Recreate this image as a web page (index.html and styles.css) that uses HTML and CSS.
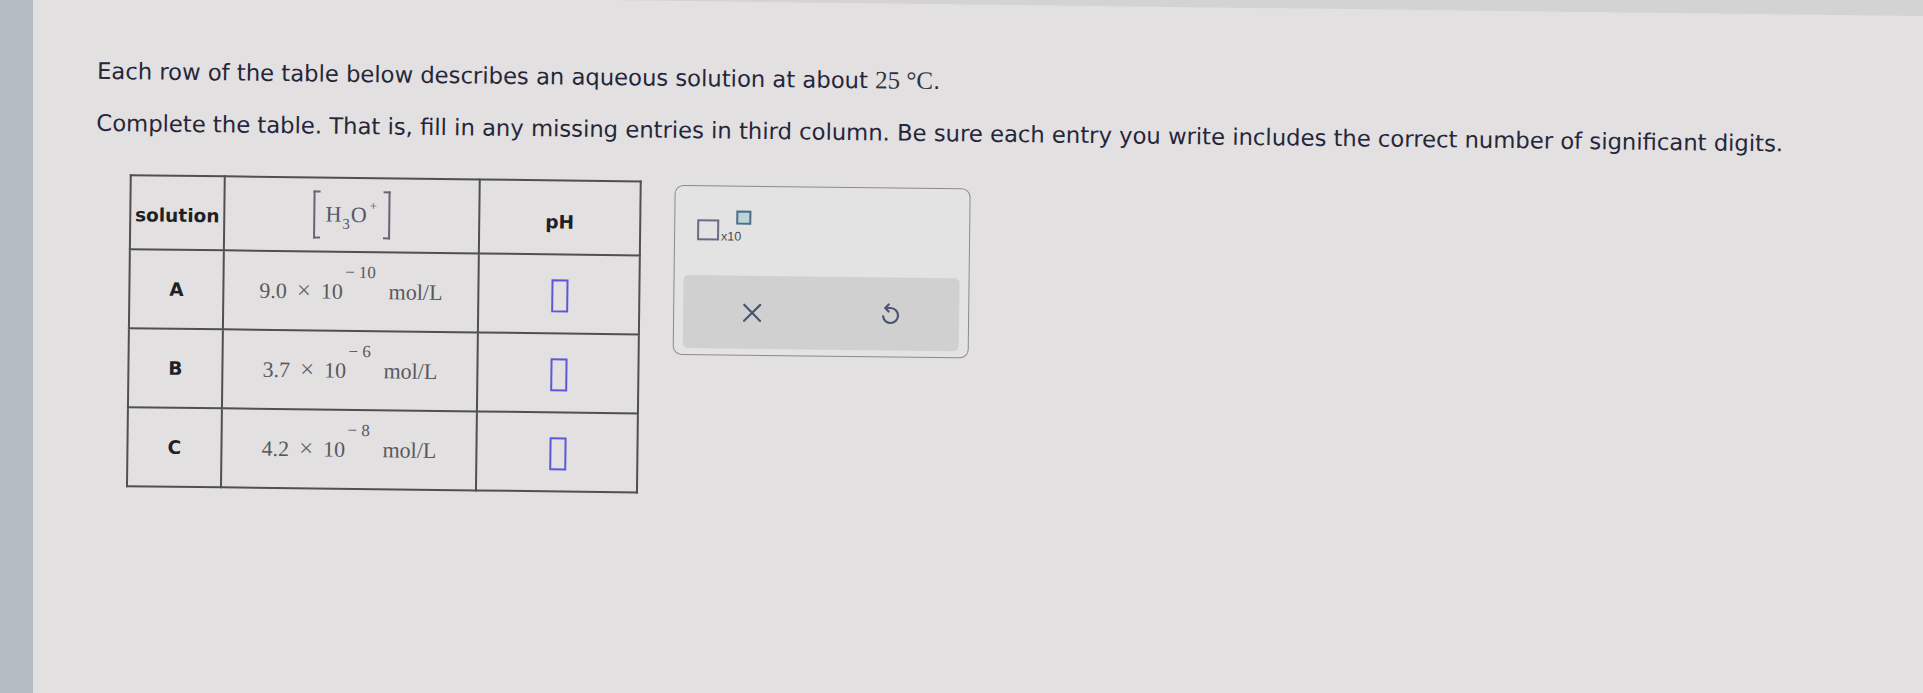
FILE: index.html
```html
<!DOCTYPE html>
<html lang="en">
<head>
<meta charset="utf-8">
<title>Aqueous solutions table</title>
<link rel="stylesheet" href="styles.css">
</head>
<body>
<div class="screen">
  <div class="bezel"></div>
  <div class="page">
    <div class="content">
      <p class="line line-1">Each row of the table below describes an aqueous solution at about <span class="serif">25 °C</span>.</p>
      <p class="line line-2">Complete the table. That is, fill in any missing entries in third column. Be sure each entry you write includes the correct number of significant digits.</p>
      <div class="work">
        <table class="grid">
          <tr class="row-head">
            <th class="c1">solution</th>
            <th class="c2">
              <span class="conc">
                <span class="brk brk-l"></span>
                <span class="chem">H<span class="sub">3</span>O<span class="sup">+</span></span>
                <span class="brk brk-r"></span>
              </span>
            </th>
            <th class="c3">pH</th>
          </tr>
          <tr class="row row-a">
            <td class="c1 lbl">A</td>
            <td class="c2"><span class="qty"><span>9.0</span><span class="times">×</span><span>10</span><span class="exp">− 10</span><span class="unit">mol/L</span></span></td>
            <td class="c3"><span class="ans"></span></td>
          </tr>
          <tr class="row row-b">
            <td class="c1 lbl">B</td>
            <td class="c2"><span class="qty"><span>3.7</span><span class="times">×</span><span>10</span><span class="exp">− 6</span><span class="unit">mol/L</span></span></td>
            <td class="c3"><span class="ans"></span></td>
          </tr>
          <tr class="row row-c">
            <td class="c1 lbl">C</td>
            <td class="c2"><span class="qty"><span>4.2</span><span class="times">×</span><span>10</span><span class="exp">− 8</span><span class="unit">mol/L</span></span></td>
            <td class="c3"><span class="ans"></span></td>
          </tr>
        </table>
        <div class="tool">
          <div class="sci">
            <span class="sci-base"></span>
            <span class="sci-x">x10</span>
            <span class="sci-exp"></span>
          </div>
          <div class="bar">
            <span class="btn">
              <svg width="22" height="22" viewBox="0 0 22 22"><path d="M3 3 L19 19 M19 3 L3 19" fill="none" stroke="#4a5571" stroke-width="2.2" stroke-linecap="round"/></svg>
            </span>
            <span class="btn">
              <svg width="22" height="26" viewBox="0 0 22 26"><path d="M9.5 3 L6 6.5 L9.5 10 M6 6.5 H11.5 A7.5 7.5 0 1 1 4 15" fill="none" stroke="#4a5571" stroke-width="2.2" stroke-linecap="round" stroke-linejoin="round"/></svg>
            </span>
          </div>
        </div>
      </div>
    </div>
  </div>
</div>
</body>
</html>
```
FILE: styles.css
```css
html, body {
  margin: 0;
  padding: 0;
}
body {
  background: #d3d3d4;
  overflow: hidden;
  width: 1923px;
  height: 693px;
}
.screen {
  display: flex;
  width: 1923px;
  height: 693px;
  overflow: hidden;
}
.bezel {
  flex: none;
  width: 33px;
  height: 100%;
  background: #b4bcc3;
  position: relative;
  z-index: 2;
}
.page {
  flex: none;
  width: 1915px;
  height: 730px;
  margin-top: -7px;
  background: #e2e0e0;
  transform: rotate(0.7deg);
  transform-origin: 0 0;
}
.content {
  padding: 63px 0 0 65px;
  font-family: "DejaVu Sans", "Liberation Sans", sans-serif;
  color: #26263a;
}
.line {
  margin: 0;
  font-size: 22.7px;
  line-height: 27px;
  white-space: nowrap;
}
.line-2 {
  margin-top: 25px;
}
.serif {
  font-family: "Liberation Serif", serif;
  font-size: 25px;
  color: #333340;
}
.work {
  display: flex;
  align-items: flex-start;
  gap: 33px;
  margin: 37px 0 0 34px;
}
.grid {
  border-collapse: collapse;
  border: 2px solid #505050;
  flex: none;
}
.grid th, .grid td {
  border: 2px solid #505050;
  padding: 0;
  text-align: center;
  vertical-align: middle;
}
.c1 { width: 92px; }
.c2 { width: 253px; }
.c3 { width: 159px; }
.row-head { height: 74px; }
.row { height: 79px; }
.grid th, .lbl {
  font-family: "DejaVu Sans", "Liberation Sans", sans-serif;
  font-weight: bold;
  font-size: 18.5px;
  color: #1f1f26;
}
.grid th.c1 {
  padding-top: 4px;
}
.grid th.c3 {
  padding-top: 8px;
}
.conc {
  display: inline-flex;
  align-items: center;
  vertical-align: middle;
  font-weight: normal;
}
.brk {
  display: block;
  width: 5px;
  height: 44px;
  border: 2px solid #6a6479;
}
.brk-l { border-right: none; margin-right: 5px; }
.brk-r { border-left: none; margin-left: 6px; }
.chem {
  font-family: "Liberation Serif", serif;
  font-weight: normal;
  font-size: 22px;
  color: #575766;
  line-height: 1;
}
.chem .sub {
  font-size: 15px;
  position: relative;
  top: 7px;
  margin: 0 1px;
}
.chem .sup {
  font-size: 13px;
  position: relative;
  top: -12px;
  margin-left: 3px;
}
.qty {
  font-family: "Liberation Serif", serif;
  font-size: 22px;
  color: #58585d;
  white-space: nowrap;
  position: relative;
  top: -1px;
}
.times {
  font-size: 25px;
  margin: 0 10px;
  color: #66666c;
}
.exp {
  font-size: 17px;
  position: relative;
  top: -21px;
  margin-left: 2px;
}
.unit {
  margin-left: 13px;
}
.ans {
  display: inline-block;
  width: 17px;
  height: 33px;
  box-sizing: border-box;
  border: 2px solid #5a5ad6;
  vertical-align: middle;
  margin-left: 1px;
  position: relative;
  top: 2px;
}
.tool {
  flex: none;
  width: 296px;
  height: 170px;
  margin-top: 4px;
  box-sizing: border-box;
  border: 1.5px solid #8b8b8d;
  border-radius: 9px;
  background: #e4e3e3;
  display: flex;
  flex-direction: column;
}
.sci {
  display: flex;
  align-items: flex-start;
  padding: 24px 0 0 22px;
}
.sci-base {
  width: 22px;
  height: 21px;
  box-sizing: border-box;
  border: 2px solid #6d6a86;
  margin-top: 9px;
}
.sci-x {
  font-family: "Liberation Sans", Arial, sans-serif;
  font-size: 12.5px;
  line-height: 13px;
  color: #4b4b58;
  margin: 20px 0 0 2px;
}
.sci-exp {
  width: 15px;
  height: 14px;
  box-sizing: border-box;
  border: 2px solid #4f6f89;
  background: #b9d5da;
  margin-left: -5px;
}
.bar {
  margin: auto 9px 6px 9px;
  height: 73px;
  background: #d1d0d0;
  border-radius: 5px;
  display: grid;
  grid-template-columns: 1fr 1fr;
  place-items: center;
}
.btn {
  display: flex;
  align-items: center;
  justify-content: center;
}
.btn svg { display: block; }
```
